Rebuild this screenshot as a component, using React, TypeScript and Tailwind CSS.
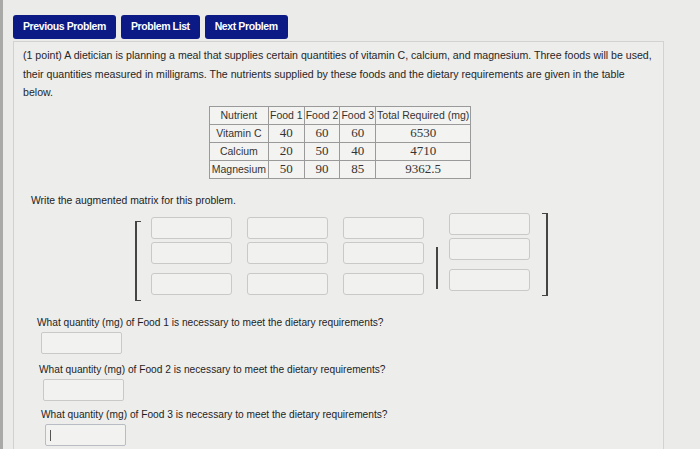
import React from 'react';

const NAV = ['Previous Problem', 'Problem List', 'Next Problem'];

const ROWS: { name: string; vals: string[]; total: string }[] = [
  { name: 'Vitamin C', vals: ['40', '60', '60'], total: '6530' },
  { name: 'Calcium', vals: ['20', '50', '40'], total: '4710' },
  { name: 'Magnesium', vals: ['50', '90', '85'], total: '9362.5' },
];

const QUESTIONS = [
  'What quantity (mg) of Food 1 is necessary to meet the dietary requirements?',
  'What quantity (mg) of Food 2 is necessary to meet the dietary requirements?',
  'What quantity (mg) of Food 3 is necessary to meet the dietary requirements?',
];

const serif = { fontFamily: '"Liberation Serif", "Times New Roman", serif' };

function Cell() {
  return <div className="w-[81px] h-[22px] rounded-[3px] border border-[#c9c9c7] bg-[#f1f1ef]" />;
}

function MatrixColumn() {
  return (
    <div className="flex flex-col">
      <Cell />
      <div className="h-[3px]" />
      <Cell />
      <div className="h-[9px]" />
      <Cell />
    </div>
  );
}

export default function App() {
  return (
    <div
      className="relative w-[700px] h-[449px] overflow-hidden bg-[#ebebea] text-[#222]"
      style={{ fontFamily: '"Liberation Sans", Arial, sans-serif' }}
    >
      {/* dark strip at the left edge */}
      <div className="absolute left-0 top-0 h-full w-[3px] bg-[#a9a9a7]" />

      <div className="pl-[13px] pt-[15px]">
        {/* nav buttons */}
        <div className="flex gap-[5px]">
          {NAV.map((label) => (
            <button
              key={label}
              className="h-[24px] px-[10px] rounded-[3px] bg-[#0b1a85] text-white text-[10.5px] font-bold tracking-[-0.4px]"
            >
              {label}
            </button>
          ))}
        </div>

        {/* problem box */}
        <div className="mt-[2px] w-[651px] h-[420px] border border-[#d2d2d0] bg-[#ededec] pl-[9px] pr-[6px] pt-[4px]">
          <p className="text-[10.6px] leading-[18.5px] text-[#262626]">
            (1 point) A dietician is planning a meal that supplies certain quantities of vitamin C, calcium, and
            magnesium. Three foods will be used, their quantities measured in milligrams. The nutrients supplied by
            these foods and the dietary requirements are given in the table below.
          </p>

          <div className="flex justify-center mt-[4px]">
            <table className="border-collapse border border-[#555] bg-[#f3f3f1] text-[#333] whitespace-nowrap">
              <thead>
                <tr className="h-[18px] text-[10.5px] leading-[16px]">
                  <th className="font-normal border border-[#9a9a9a] px-[5px]">Nutrient</th>
                  <th className="font-normal border border-[#9a9a9a] px-[1px]">Food 1</th>
                  <th className="font-normal border border-[#9a9a9a] px-[1px]">Food 2</th>
                  <th className="font-normal border border-[#9a9a9a] px-[1px]">Food 3</th>
                  <th className="font-normal border border-[#9a9a9a] px-[1px]">Total Required (mg)</th>
                </tr>
              </thead>
              <tbody>
                {ROWS.map((r) => (
                  <tr key={r.name} className="h-[18px] leading-[16px]">
                    <td className="border border-[#9a9a9a] text-center text-[10.5px] px-[2px]">{r.name}</td>
                    {r.vals.map((v, i) => (
                      <td key={i} className="border border-[#9a9a9a] text-center text-[13px]" style={serif}>
                        {v}
                      </td>
                    ))}
                    <td className="border border-[#9a9a9a] text-center text-[13px]" style={serif}>
                      {r.total}
                    </td>
                  </tr>
                ))}
              </tbody>
            </table>
          </div>

          <p className="mt-[14px] pl-[8px] text-[10.4px] leading-[16px]">Write the augmented matrix for this problem.</p>

          {/* augmented matrix */}
          <div className="mt-[4px] ml-[112px] flex items-start">
            <div className="mt-[8px] w-[6px] h-[80px] border-l-[2px] border-t border-b border-[#444]" />
            <div className="ml-[10px] flex gap-[15px] mt-[4px]">
              <MatrixColumn />
              <MatrixColumn />
              <MatrixColumn />
            </div>
            <div className="ml-[12px] mt-[34px] w-[2px] h-[42px] bg-[#444]" />
            <div className="ml-[11px]">
              <MatrixColumn />
            </div>
            <div className="ml-[12px] w-[6px] h-[83px] border-r-[2px] border-t border-b border-[#444]" />
          </div>

          {/* questions */}
          <div className="mt-[15px] flex flex-col">
            {QUESTIONS.map((q, i) => (
              <div key={q} className={i === 0 ? 'pl-[14px]' : i === 1 ? 'pl-[16px] mt-[9px]' : 'pl-[18px] mt-[7px]'}>
                <p className="text-[10.2px] leading-[14px] text-[#1e1e1e]">{q}</p>
                <div
                  className={
                    'relative mt-[2px] ml-[4px] w-[81px] h-[22px] rounded-[2px] border bg-[#f2f2f0] ' +
                    (i === 2 ? 'border-[#b9bcc4]' : 'border-[#c9c9c7]')
                  }
                >
                  {i === 2 && <div className="absolute left-[4px] top-[5px] w-px h-[11px] bg-[#555]" />}
                </div>
              </div>
            ))}
          </div>
        </div>
      </div>
    </div>
  );
}
